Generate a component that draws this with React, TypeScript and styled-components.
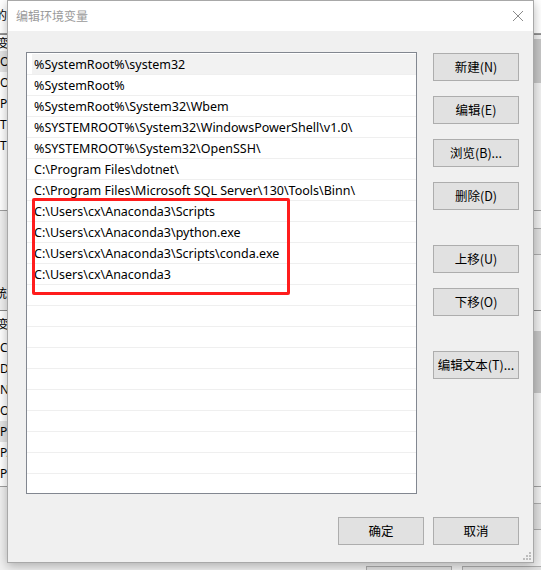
import React from 'react';
import styled, { createGlobalStyle } from 'styled-components';

const Global = createGlobalStyle`
  html, body { margin: 0; padding: 0; background: #f0f0f0; }
  body { font-family: "Noto Sans", "Noto Sans CJK SC", sans-serif; }
  * { box-sizing: border-box; }
`;

const UI_FONT = `"Noto Sans", "Noto Sans CJK SC", sans-serif`;

const Screen = styled.div`
  position: relative;
  width: 541px;
  height: 570px;
  overflow: hidden;
  background: #f0f0f0;
`;

/* ---------- background window (Environment Variables), only its edges show ---------- */

const BackWindow = styled.div`
  position: absolute;
  left: -30px;
  top: 0;
  width: 580px;
  height: 600px;
  display: flex;
  flex-direction: column;
  background: #f0f0f0;
  font: 12px ${UI_FONT};
  color: #000;
`;

const BackLabel = styled.div<{ $h: number; $pb: number; $white?: boolean }>`
  height: ${(p) => p.$h}px;
  flex: none;
  display: flex;
  align-items: flex-end;
  padding: 0 0 ${(p) => p.$pb}px 0;
  line-height: 16px;
  background: ${(p) => (p.$white ? '#fff' : 'transparent')};
  border-bottom: ${(p) => (p.$white ? '1px solid #9a9a9a' : 'none')};
`;

/* clips the background text where the dialog covers it */
const Clip = styled.span<{ $indent: number }>`
  display: block;
  width: 37px;
  overflow: hidden;
  white-space: nowrap;
  padding-left: ${(p) => p.$indent}px;
`;

const BackPanel = styled.div`
  height: 177px;
  flex: none;
  margin-right: 5px;
  display: flex;
  background: #fff;
  border-top: 1px solid #8c8c8c;
  border-bottom: 1px solid #a0a0a0;
  overflow: hidden;
`;

const BackRows = styled.div`
  flex: 1;
  display: flex;
  flex-direction: column;
`;

const BackHead = styled.div<{ $h: number }>`
  height: ${(p) => p.$h}px;
  flex: none;
  display: flex;
  align-items: center;
`;

const BackRow = styled.div<{ $sel?: boolean }>`
  height: 21px;
  flex: none;
  display: flex;
  align-items: center;
  background: ${(p) => (p.$sel ? '#e5e5e5' : 'transparent')};
`;

const ScrollTrack = styled.div<{ $top: number; $len: number }>`
  width: 17px;
  position: relative;
  background: #f0f0f0;
  border-left: 1px solid #e6e6e6;
  &::after {
    content: '';
    position: absolute;
    left: 5px;
    width: 7px;
    top: ${(p) => p.$top}px;
    height: ${(p) => p.$len}px;
    background: #c6c6c6;
  }
`;

const BackButtons = styled.div<{ $mt: number }>`
  margin-top: ${(p) => p.$mt}px;
  flex: none;
  display: flex;
  justify-content: flex-end;
  gap: 10px;
  padding-right: 2px;
`;

const BackButton = styled.div<{ $h: number }>`
  width: 86px;
  height: ${(p) => p.$h}px;
  background: #e1e1e1;
  border: 1px solid #adadad;
`;

/* ---------- edit dialog ---------- */

const Dialog = styled.div`
  position: absolute;
  left: 7px;
  top: 0;
  width: 527px;
  height: 563px;
  border: 1px solid #a8a8a8;
  background: #f0f0f0;
  display: flex;
  flex-direction: column;
  box-shadow: 0 3px 10px rgba(0, 0, 0, 0.28);
  font: 12px ${UI_FONT};
  color: #000;
`;

const TitleBar = styled.div`
  height: 30px;
  flex: none;
  background: #fff;
  display: flex;
  align-items: center;
  justify-content: space-between;
  padding: 0 9px 0 8px;
`;

const Title = styled.span`
  font-size: 12px;
  color: #9a9a9a;
  padding-bottom: 1px;
  font-family: "Noto Sans CJK SC", sans-serif;
`;

const CloseIcon = styled.svg`
  width: 12px;
  height: 12px;
  display: block;
`;

const Body = styled.div`
  flex: 1;
  display: flex;
  flex-direction: column;
  padding: 21px 14px 0 18px;
  position: relative;
`;

const Main = styled.div`
  display: flex;
  gap: 16px;
`;

const ListBox = styled.div`
  position: relative;
  width: 391px;
  height: 442px;
  border: 1px solid #828790;
  background: #fff;
  padding-top: 1px;
  overflow: hidden;
  display: flex;
  flex-direction: column;
`;

const Row = styled.div<{ $active?: boolean }>`
  height: 21px;
  flex: none;
  border-bottom: 1px solid #efefef;
  display: flex;
  align-items: center;
  padding: 1px 0 0 7px;
  white-space: nowrap;
  font-size: 12.5px;
  background: ${(p) =>
    p.$active ? 'linear-gradient(to right, #fff 5px, #f2f2f2 5px)' : '#fff'};
`;

const Highlight = styled.div`
  position: absolute;
  left: 5px;
  top: 145px;
  width: 258px;
  height: 97px;
  border: 3px solid #ff1d1d;
  border-radius: 2px;
  pointer-events: none;
`;

const ButtonCol = styled.div`
  display: flex;
  flex-direction: column;
  gap: 15px;
  padding-top: 1px;
`;

const Button = styled.button<{ $extra?: number }>`
  width: 86px;
  height: 28px;
  margin: ${(p) => (p.$extra ? `${p.$extra}px 0 0` : '0')};
  padding: 0 0 1px;
  background: #e1e1e1;
  border: 1px solid #adadad;
  border-radius: 0;
  font: 12.5px "Noto Sans CJK SC", sans-serif;
  color: #000;
  white-space: nowrap;
`;

const Footer = styled.div`
  margin-top: 23px;
  display: flex;
  justify-content: flex-end;
  gap: 9px;
`;

const Grip = styled.svg`
  position: absolute;
  right: 2px;
  bottom: 2px;
  width: 8px;
  height: 8px;
`;

const paths = [
  '%SystemRoot%\\system32',
  '%SystemRoot%',
  '%SystemRoot%\\System32\\Wbem',
  '%SYSTEMROOT%\\System32\\WindowsPowerShell\\v1.0\\',
  '%SYSTEMROOT%\\System32\\OpenSSH\\',
  'C:\\Program Files\\dotnet\\',
  'C:\\Program Files\\Microsoft SQL Server\\130\\Tools\\Binn\\',
  'C:\\Users\\cx\\Anaconda3\\Scripts',
  'C:\\Users\\cx\\Anaconda3\\python.exe',
  'C:\\Users\\cx\\Anaconda3\\Scripts\\conda.exe',
  'C:\\Users\\cx\\Anaconda3',
];

const userVars = ['OneDrive', 'OneDriveConsumer', 'Path', 'TEMP', 'TMP'];
const sysVars = [
  'ComSpec',
  'DriverData',
  'NUMBER_OF_PROCESSORS',
  'OS',
  'Path',
  'PATHEXT',
  'PROCESSOR_ARCHITECTURE',
  'PSModulePath',
];

export default function App() {
  const rows = [...paths, ...Array(21 - paths.length).fill('')];
  return (
    <Screen>
      <Global />
      <BackWindow>
        <BackLabel $h={34} $pb={9} $white>
          <Clip $indent={13}>cx的用户变量(U)</Clip>
        </BackLabel>
        <BackPanel>
          <BackRows>
            <BackHead $h={16}>
              <Clip $indent={27}>变量</Clip>
            </BackHead>
            {userVars.map((v, i) => (
              <BackRow key={v} $sel={i === 0}>
                <Clip $indent={30}>{v}</Clip>
              </BackRow>
            ))}
          </BackRows>
          <ScrollTrack $top={4} $len={44} />
        </BackPanel>
        <BackButtons $mt={17}>
          <BackButton $h={27} />
          <BackButton $h={27} />
        </BackButtons>
        <BackLabel $h={55} $pb={8}>
          <Clip $indent={13}>系统变量(S)</Clip>
        </BackLabel>
        <BackPanel>
          <BackRows>
            <BackHead $h={26}>
              <Clip $indent={27}>变量</Clip>
            </BackHead>
            {sysVars.map((v, i) => (
              <BackRow key={v + i} $sel={i === 4}>
                <Clip $indent={30}>{v}</Clip>
              </BackRow>
            ))}
          </BackRows>
          <ScrollTrack $top={20} $len={62} />
        </BackPanel>
        <BackButtons $mt={16}>
          <BackButton $h={27} />
          <BackButton $h={27} />
        </BackButtons>
        <BackButtons $mt={36}>
          <BackButton $h={28} />
          <BackButton $h={28} />
        </BackButtons>
      </BackWindow>

      <Dialog>
        <TitleBar>
          <Title>编辑环境变量</Title>
          <CloseIcon viewBox="0 0 12 12">
            <path d="M1 1 L11 11 M11 1 L1 11" stroke="#8a8a8a" strokeWidth="1" fill="none" />
          </CloseIcon>
        </TitleBar>
        <Body>
          <Main>
            <ListBox>
              {rows.map((p, i) => (
                <Row key={i} $active={i === 0}>{p}</Row>
              ))}
              <Highlight />
            </ListBox>
            <ButtonCol>
              <Button>新建(N)</Button>
              <Button>编辑(E)</Button>
              <Button>浏览(B)...</Button>
              <Button>删除(D)</Button>
              <Button $extra={20}>上移(U)</Button>
              <Button>下移(O)</Button>
              <Button $extra={20}>编辑文本(T)...</Button>
            </ButtonCol>
          </Main>
          <Footer>
            <Button>确定</Button>
            <Button>取消</Button>
          </Footer>
          <Grip viewBox="0 0 8 8">
            <rect x="6" y="0" width="2" height="2" fill="#bdbdbd" />
            <rect x="3" y="3" width="2" height="2" fill="#bdbdbd" />
            <rect x="6" y="3" width="2" height="2" fill="#bdbdbd" />
            <rect x="0" y="6" width="2" height="2" fill="#bdbdbd" />
            <rect x="3" y="6" width="2" height="2" fill="#bdbdbd" />
            <rect x="6" y="6" width="2" height="2" fill="#bdbdbd" />
          </Grip>
        </Body>
      </Dialog>
    </Screen>
  );
}
